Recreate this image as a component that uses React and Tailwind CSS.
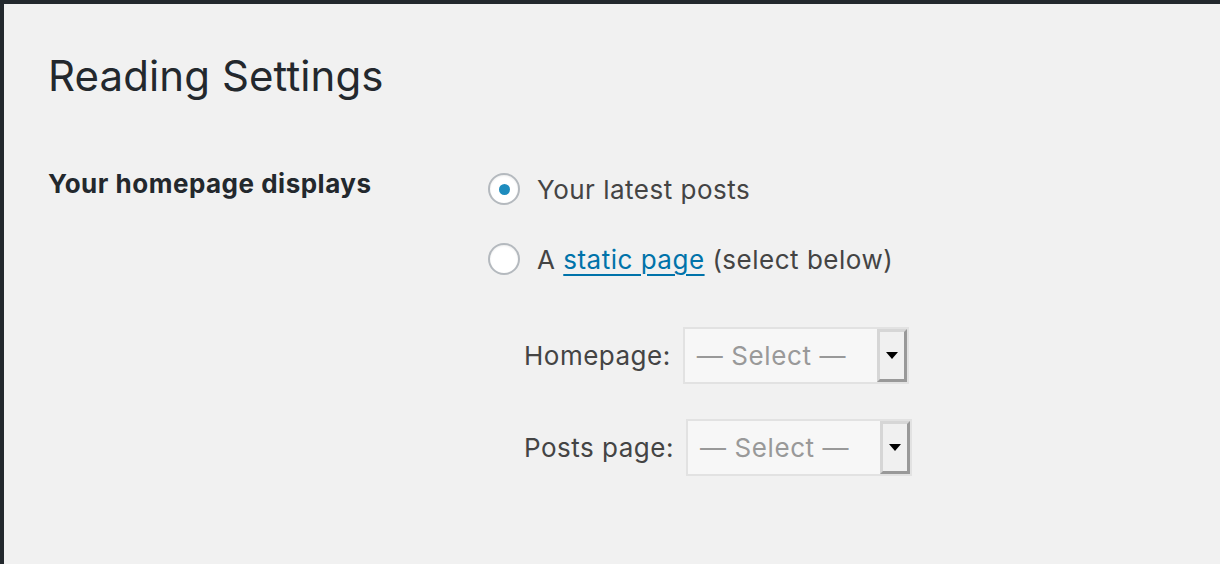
import React from "react";

function Radio({ checked }) {
  return (
    <span className="w-[32px] h-[32px] rounded-full border-2 border-[#b4b9be] bg-white flex items-center justify-center shrink-0 shadow-[inset_0_1px_2px_rgba(0,0,0,0.07)]">
      {checked && <span className="w-[11px] h-[11px] rounded-full bg-[#1e8cbe]" />}
    </span>
  );
}

function Select() {
  return (
    <div className="w-[226px] h-[57px] border-2 border-[#e2e2e2] bg-[#f7f7f7] flex items-stretch">
      <div className="flex-1 flex items-center pl-[12px] text-[26px] tracking-[0.6px] text-[#999999]">— Select —</div>
      <div className="w-[30px] bg-[#f0f0f0] border-t-[3px] border-l-[3px] border-t-[#d6d6d6] border-l-[#d6d6d6] border-b-[3px] border-r-[3px] border-b-[#999999] border-r-[#999999] flex items-center justify-center">
        <svg width="12" height="7" viewBox="0 0 12 7"><path d="M0 0H12L6 7Z" fill="#000" /></svg>
      </div>
    </div>
  );
}

export default function App() {
  return (
    <div
      className="w-[1220px] h-[564px] bg-[#23282d] pt-[4px] pl-[4px] overflow-hidden"
      style={{ fontFamily: "Inter, 'Noto Sans', sans-serif" }}
    >
      <div className="w-full h-full bg-[#f1f1f1] pl-[44px] pt-[46px]">
        <h1 className="text-[42px] leading-[52px] text-[#23282d] font-normal tracking-[0.1px]">Reading Settings</h1>
        <div className="flex mt-[68px]">
          <div className="w-[440px] text-[26px] tracking-[0.5px] font-bold text-[#23282d] leading-[30px] -mt-[1px]">Your homepage displays</div>
          <div className="flex flex-col text-[26px] tracking-[0.5px] text-[#444444]">
            <div className="flex items-center gap-[17px] h-[32px] mt-[3px]">
              <Radio checked />
              <span>Your latest posts</span>
            </div>
            <div className="flex items-center gap-[17px] h-[32px] mt-[38px]">
              <Radio />
              <span>
                A <a href="#" className="text-[#0073aa] underline underline-offset-[5px] decoration-[2px]">static page</a> (select below)
              </span>
            </div>
            <div className="flex flex-col ml-[36px] mt-[52px] gap-[35px]">
              <div className="flex items-center gap-[12px]">
                <span>Homepage:</span>
                <Select />
              </div>
              <div className="flex items-center gap-[12px]">
                <span>Posts page:</span>
                <Select />
              </div>
            </div>
          </div>
        </div>
      </div>
    </div>
  );
}
